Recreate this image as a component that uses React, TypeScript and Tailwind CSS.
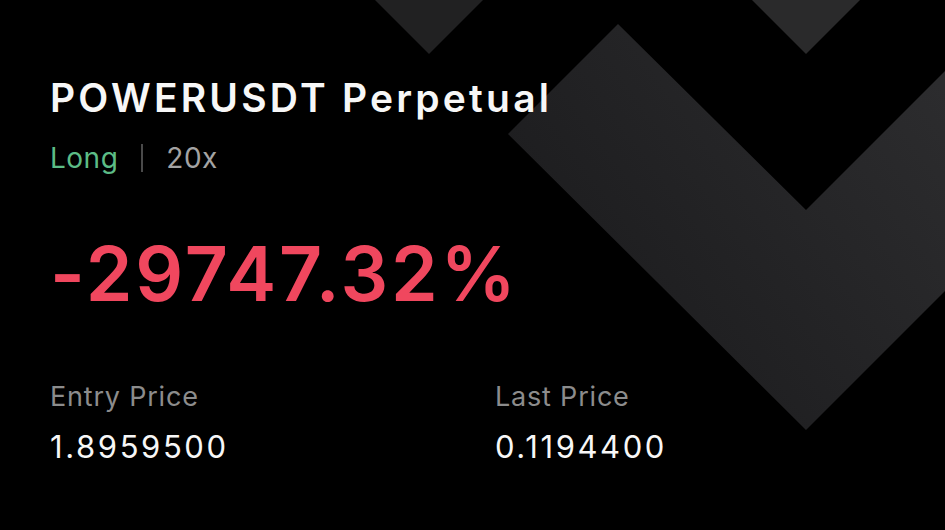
// ── Position share card ──────────────────────────────
const position = {
  symbol: "POWERUSDT Perpetual",
  side: "Long",
  leverage: "20x",
  roe: "-29747.32%",
  entryPrice: "1.8959500",
  lastPrice: "0.1194400",
};

function Backdrop() {
  return (
    <svg
      className="absolute inset-0 h-full w-full"
      viewBox="0 0 945 530"
      preserveAspectRatio="none"
    >
      <defs>
        <linearGradient id="band" x1="500" y1="420" x2="945" y2="90" gradientUnits="userSpaceOnUse">
          <stop offset="0" stopColor="#18181a" />
          <stop offset="1" stopColor="#2c2c2e" />
        </linearGradient>
      </defs>
      <polygon points="375,0 483,0 429,54" fill="#212122" />
      <polygon points="752,0 860,0 806,54" fill="#2a2a2b" />
      <polygon
        points="618,24 806,210 1000,16 1000,236 806,430 508,134"
        fill="url(#band)"
      />
    </svg>
  );
}

export default function App() {
  return (
    <div className="relative h-[530px] w-[945px] overflow-hidden bg-black font-['Inter','Open_Sans',sans-serif]">
      <Backdrop />

      <div className="relative flex flex-col pl-[50px] pt-[73px]">
        {/* Header */}
        <h1 className="text-[39px] font-semibold leading-[50px] tracking-[3.2px] text-[#f7f7f7]">
          {position.symbol}
        </h1>
        <div className="mt-[16px] flex items-center text-[28px] leading-[38px] tracking-[0.5px]">
          <span className="text-[#5cbc86]">{position.side}</span>
          <span className="mx-[23px] h-[28px] w-[2px] bg-[#4a4a4a]" />
          <span className="text-[#a3a3a3]">{position.leverage}</span>
        </div>

        {/* ROE */}
        <div className="mt-[52px] text-[75px] font-semibold leading-[90px] tracking-[2.8px] text-[#f0475e]">
          {position.roe}
        </div>

        {/* Prices */}
        <div className="mt-[61px] grid grid-cols-[445px_1fr]">
          <div className="flex flex-col">
            <span className="text-[27px] leading-[34px] tracking-[0.8px] text-[#8c8c8c]">Entry Price</span>
            <span className="mt-[15px] text-[31px] leading-[36px] tracking-[2.6px] text-[#f7f7f7]">
              {position.entryPrice}
            </span>
          </div>
          <div className="flex flex-col">
            <span className="text-[27px] leading-[34px] tracking-[0.8px] text-[#8c8c8c]">Last Price</span>
            <span className="mt-[15px] text-[31px] leading-[36px] tracking-[2.6px] text-[#f7f7f7]">
              {position.lastPrice}
            </span>
          </div>
        </div>
      </div>
    </div>
  );
}
